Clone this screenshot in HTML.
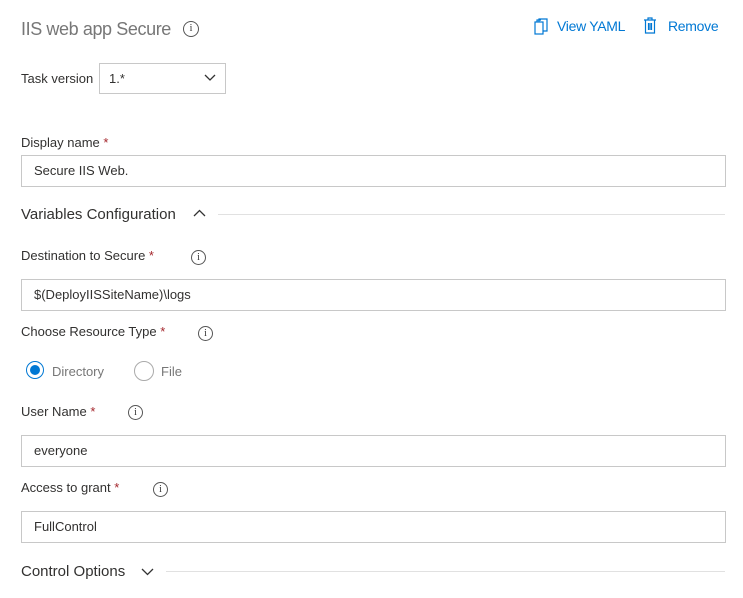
<html><head><style>
body{margin:0;width:743px;height:598px;background:#fff;font-family:"Liberation Sans",sans-serif;color:#323130;position:relative;overflow:hidden}
.a{position:absolute;white-space:nowrap}
.l{font-size:13px}
.r{color:#a4262c}
.in{position:absolute;left:21px;border:1px solid #c8c8c8;font-size:13px;line-height:30px;padding-left:12px;box-sizing:border-box;width:705px;height:32px}
.i{position:absolute;width:13px;height:13px;border:1px solid #555;border-radius:50%;font-size:10px;text-align:center;line-height:13px;color:#333;font-family:"Liberation Serif",serif}
.h{font-size:15px;color:#323130}
.ln{position:absolute;height:1px;background:#e1e1e1}
</style></head><body>
<div class="a" style="left:21px;top:19px;font-size:18px;color:#777;letter-spacing:-0.4px">IIS web app Secure</div>
<div class="i" style="left:183px;top:21px;width:14px;height:14px;line-height:14px">i</div>
<svg class="a" style="left:533px;top:18px" width="16" height="17" viewBox="0 0 16 17" fill="none" stroke="#0078d4" stroke-width="1.2"><rect x="2" y="4" width="8" height="12"/><path d="M6 4V1h8v12h-4M4 4V2h4"/></svg>
<div class="a" style="left:557px;top:18px;font-size:14px;color:#0078d4;letter-spacing:-0.3px">View YAML</div>
<svg class="a" style="left:643px;top:17px" width="14" height="17" viewBox="0 0 14 17" fill="none" stroke="#0078d4" stroke-width="1.2"><path d="M1 3h12M5 3V1h4v2M2.5 3v13h9V3M5.5 6v7M7 6v7M8.5 6v7"/></svg>
<div class="a" style="left:668px;top:18px;font-size:14px;color:#0078d4;letter-spacing:-0.3px">Remove</div>
<div class="a l" style="left:21px;top:71px">Task version</div>
<div class="a" style="left:99px;top:63px;width:127px;height:31px;border:1px solid #c8c8c8;box-sizing:border-box;font-size:13px;line-height:29px;padding-left:9px">1.*</div>
<svg class="a" style="left:204px;top:74px" width="12" height="8"><path d="M1 1l5 5 5-5" stroke="#333" fill="none" stroke-width="1.3"/></svg>
<div class="a l" style="left:21px;top:135px">Display name <span class="r">*</span></div>
<div class="in" style="top:155px">Secure IIS Web.</div>
<div class="a h" style="left:21px;top:206px">Variables Configuration</div>
<svg class="a" style="left:193px;top:209px" width="13" height="9"><path d="M1 7l5.5-5.5L12 7" stroke="#333" fill="none" stroke-width="1.3"/></svg>
<div class="ln" style="left:218px;top:214px;width:507px"></div>
<div class="a l" style="left:21px;top:248px">Destination to Secure <span class="r">*</span></div>
<div class="i" style="left:191px;top:250px">i</div>
<div class="in" style="top:279px">$(DeployIISSiteName)\logs</div>
<div class="a l" style="left:21px;top:324px">Choose Resource Type <span class="r">*</span></div>
<div class="i" style="left:198px;top:326px">i</div>
<div class="a" style="left:26px;top:361px;width:18px;height:18px;border:1px solid #0078d4;border-radius:50%;box-sizing:border-box"><div style="position:absolute;left:3px;top:3px;width:10px;height:10px;border-radius:50%;background:#0078d4"></div></div>
<div class="a l" style="left:52px;top:364px;color:#777">Directory</div>
<div class="a" style="left:134px;top:361px;width:20px;height:20px;border:1px solid #aaa;border-radius:50%;box-sizing:border-box"></div>
<div class="a l" style="left:161px;top:364px;color:#777">File</div>
<div class="a l" style="left:21px;top:404px">User Name <span class="r">*</span></div>
<div class="i" style="left:128px;top:405px">i</div>
<div class="in" style="top:435px">everyone</div>
<div class="a l" style="left:21px;top:480px">Access to grant <span class="r">*</span></div>
<div class="i" style="left:153px;top:482px">i</div>
<div class="in" style="top:511px">FullControl</div>
<div class="a h" style="left:21px;top:563px">Control Options</div>
<svg class="a" style="left:141px;top:567px" width="13" height="9"><path d="M1 2l5.5 5.5L12 2" stroke="#333" fill="none" stroke-width="1.3"/></svg>
<div class="ln" style="left:166px;top:571px;width:559px"></div>
</body></html>
